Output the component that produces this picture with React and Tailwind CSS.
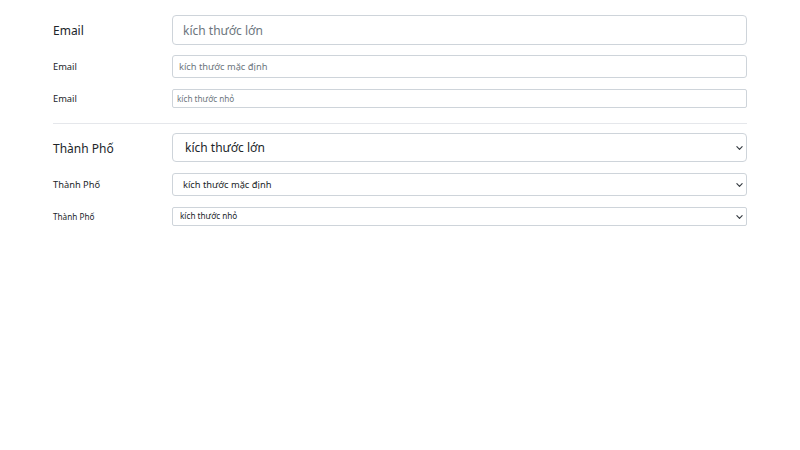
const font = { fontFamily: '"Noto Sans", "Open Sans", sans-serif' };

function Chevron({ size }) {
  return (
    <svg
      className="pointer-events-none absolute right-[4px] top-1/2 -translate-y-1/2"
      width={size}
      height={size}
      viewBox="0 0 16 16"
      fill="none"
      stroke="#343a40"
      strokeWidth="2.6"
      strokeLinecap="round"
      strokeLinejoin="round"
    >
      <path d="M2 5l6 6 6-6" />
    </svg>
  );
}

export default function App() {
  return (
    <div className="min-h-screen bg-white px-[53px] pt-[15px] text-[#212529]" style={font}>
      <div className="flex flex-col">
        <div className="flex items-center h-[30px]">
          <label className="w-[119px] pt-[2px] text-[12px]">Email</label>
          <input
            type="text"
            placeholder="kích thước lớn"
            className="block flex-1 h-[30px] rounded-[4px] border border-[#ced4da] px-[10px] text-[12px] placeholder:text-[#6c757d] outline-none"
          />
        </div>
        <div className="flex items-center h-[23px] mt-[10px]">
          <label className="w-[119px] pt-[1px] text-[9.3px]">Email</label>
          <input
            type="text"
            placeholder="kích thước mặc định"
            className="block flex-1 h-[23px] rounded-[3px] border border-[#ced4da] px-[6px] text-[9.3px] placeholder:text-[#6c757d] outline-none"
          />
        </div>
        <div className="flex items-center h-[19px] mt-[11px]">
          <label className="w-[119px] pt-[1px] text-[9.3px]">Email</label>
          <input
            type="text"
            placeholder="kích thước nhỏ"
            className="block flex-1 h-[19px] rounded-[2px] border border-[#ced4da] px-[4px] text-[8.2px] placeholder:text-[#6c757d] outline-none"
          />
        </div>

        <hr className="mt-[15px] mb-[9px] border-t border-[#e5e7eb]" />

        <div className="flex items-center h-[29px]">
          <label className="w-[119px] pt-[2px] text-[12px]">Thành Phố</label>
          <div className="relative flex-1 h-[29px]">
            <select className="block w-full h-[29px] appearance-none rounded-[4px] border border-[#ced4da] bg-white pl-[12px] text-[12px] text-[#212529] outline-none">
              <option>kích thước lớn</option>
            </select>
            <Chevron size={7} />
          </div>
        </div>
        <div className="flex items-center h-[23px] mt-[11px]">
          <label className="w-[119px] pt-[1px] text-[9.3px]">Thành Phố</label>
          <div className="relative flex-1 h-[23px]">
            <select className="block w-full h-[23px] appearance-none rounded-[3px] border border-[#ced4da] bg-white pl-[10px] text-[9.3px] text-[#212529] outline-none">
              <option>kích thước mặc định</option>
            </select>
            <Chevron size={7} />
          </div>
        </div>
        <div className="flex items-center h-[19px] mt-[11px]">
          <label className="w-[119px] pt-[1px] text-[8.2px]">Thành Phố</label>
          <div className="relative flex-1 h-[19px]">
            <select className="block w-full h-[19px] appearance-none rounded-[2px] border border-[#ced4da] bg-white pl-[7px] text-[8.2px] text-[#212529] outline-none">
              <option>kích thước nhỏ</option>
            </select>
            <Chevron size={7} />
          </div>
        </div>
      </div>
    </div>
  );
}
